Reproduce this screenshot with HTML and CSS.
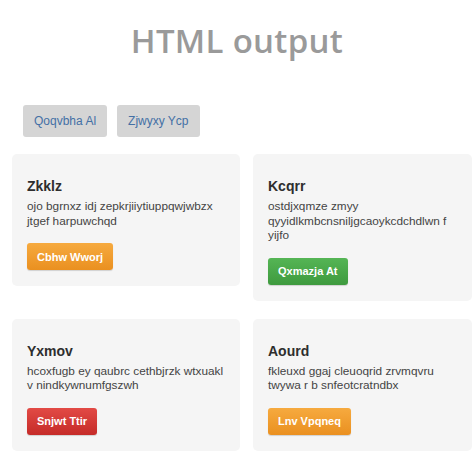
FILE: index.html
```html
<!DOCTYPE html>
<html>
<head>
<meta charset="utf-8">
<link rel="stylesheet" href="styles.css">
</head>
<body>
<h1 class="page-title">HTML output</h1>
<div class="toolbar">
  <button class="tool-btn">Qoqvbha Al</button>
  <button class="tool-btn">Zjwyxy Ycp</button>
</div>
<div class="grid">
  <div class="card">
    <h3 class="card-title">Zkklz</h3>
    <p class="card-text">ojo bgrnxz idj zepkrjiiytiuppqwjwbzx jtgef harpuwchqd</p>
    <button class="btn btn-orange">Cbhw Wworj</button>
  </div>
  <div class="card">
    <h3 class="card-title">Kcqrr</h3>
    <p class="card-text">ostdjxqmze zmyy qyyidlkmbcnsniljgcaoykcdchdlwn f yijfo</p>
    <button class="btn btn-green">Qxmazja At</button>
  </div>
  <div class="card">
    <h3 class="card-title">Yxmov</h3>
    <p class="card-text">hcoxfugb ey qaubrc cethbjrzk wtxuakl v nindkywnumfgszwh</p>
    <button class="btn btn-red">Snjwt Ttir</button>
  </div>
  <div class="card">
    <h3 class="card-title">Aourd</h3>
    <p class="card-text">fkleuxd ggaj cleuoqrid zrvmqvru twywa r b snfeotcratndbx</p>
    <button class="btn btn-orange">Lnv Vpqneq</button>
  </div>
</div>
</body>
</html>
```
FILE: styles.css
```css
html, body {
  margin: 0;
  padding: 0;
  background: #ffffff;
}
body {
  font-family: "Liberation Sans", Arial, sans-serif;
  width: 474px;
}
.page-title {
  margin: 0;
  padding-top: 21px;
  height: 84px;
  box-sizing: border-box;
  text-align: center;
  font-family: "Open Sans", sans-serif;
  font-weight: 600;
  font-size: 33px;
  line-height: 40px;
  color: #9a9a9a;
  letter-spacing: 0.3px;
}
.toolbar {
  display: flex;
  gap: 10px;
  padding-left: 23px;
  margin-top: 21px;
}
.tool-btn {
  height: 32px;
  padding: 0 11px;
  border: none;
  border-radius: 3px;
  background: #d5d5d5;
  color: #4470a5;
  font-family: "Liberation Sans", Arial, sans-serif;
  font-size: 12px;
}
.grid {
  display: grid;
  grid-template-columns: 228px 219px;
  column-gap: 13px;
  row-gap: 18px;
  align-items: start;
  padding-left: 12px;
  margin-top: 17px;
}
.card {
  background: #f5f5f5;
  border-radius: 5px;
  padding: 24px 12px 16px 15px;
}
.card-title {
  margin: 0 0 4px;
  font-size: 14px;
  line-height: 17px;
  font-weight: bold;
  color: #2e2e2e;
}
.card-text {
  margin: 0 0 15px;
  font-size: 11.8px;
  line-height: 14.5px;
  color: #444444;
}
.btn {
  display: block;
  height: 27px;
  padding: 0 10px;
  border: none;
  border-radius: 3px;
  font-family: "Liberation Sans", Arial, sans-serif;
  font-size: 11px;
  font-weight: bold;
  color: #ffffff;
  box-shadow: 0 1px 1px rgba(0,0,0,0.15);
}
.btn-orange {
  background: linear-gradient(#f6aa3f, #ea9020);
}
.btn-green {
  background: linear-gradient(#55b555, #3e9a3e);
}
.btn-red {
  background: linear-gradient(#e24a45, #c52b28);
}
```
